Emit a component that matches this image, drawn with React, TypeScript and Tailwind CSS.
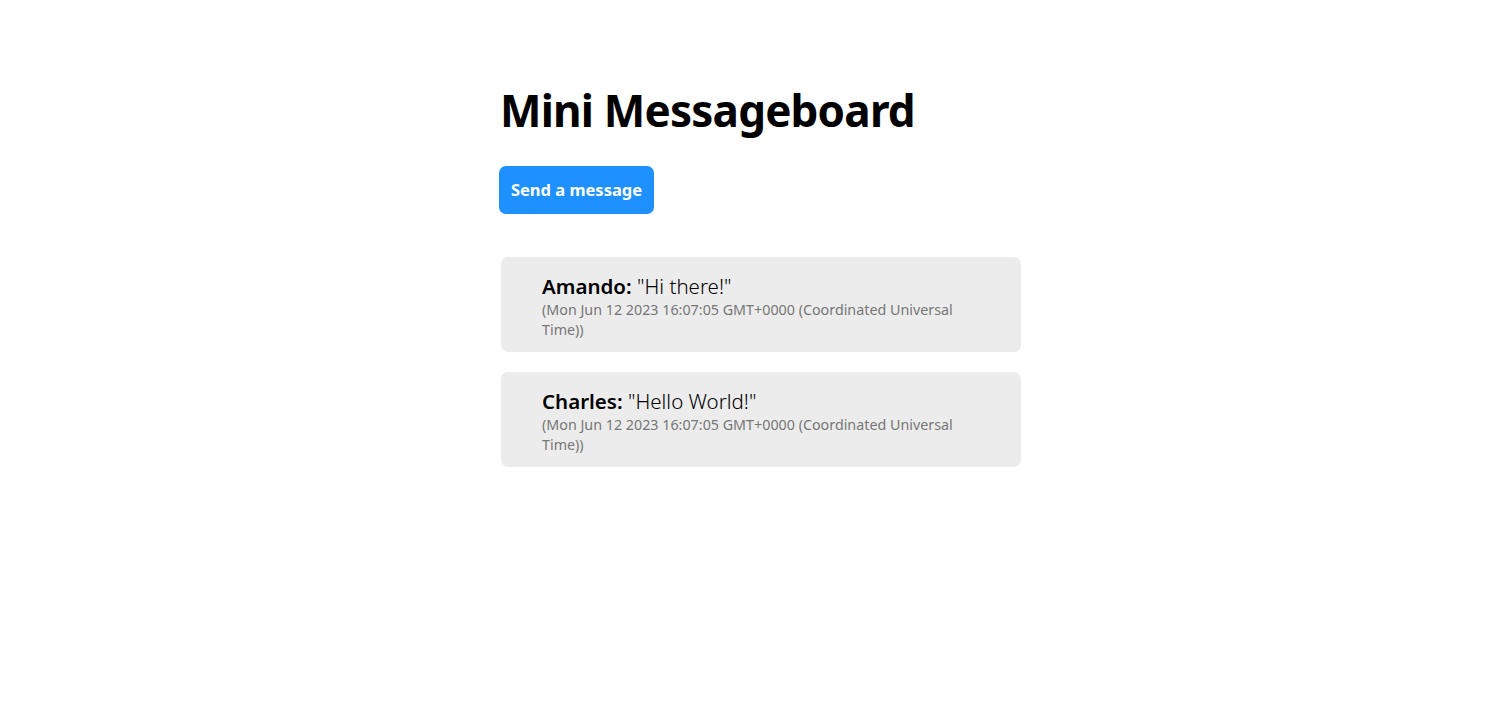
import React from "react";

interface Message {
  user: string;
  text: string;
  added: string;
}

const MESSAGES: Message[] = [
  { user: "Amando", text: "Hi there!", added: "Mon Jun 12 2023 16:07:05 GMT+0000 (Coordinated Universal Time)" },
  { user: "Charles", text: "Hello World!", added: "Mon Jun 12 2023 16:07:05 GMT+0000 (Coordinated Universal Time)" },
];

export default function App() {
  return (
    <div className="min-h-screen bg-white text-black font-['Noto_Sans',sans-serif]">
      <main className="ml-[500px] w-[521px] pt-[78px]">
        <h1 className="text-[44px] font-bold leading-[64px] tracking-[-0.8px]">Mini Messageboard</h1>
        <button className="mt-[24px] -ml-px h-[48px] w-[155px] rounded-[7px] bg-[#1e90ff] text-[16.5px] font-bold text-white">
          Send a message
        </button>
        <ul className="mt-[43px] flex flex-col gap-[20px]">
          {MESSAGES.map((m) => (
            <li key={m.user} className="ml-px rounded-[7px] bg-[#ececec] pl-[41px] pr-[60px] pt-[15px] pb-[12px]">
              <p className="text-[20.5px] leading-[28px]">
                <span className="font-semibold">{m.user}: </span>
                <span className="font-light">"{m.text}"</span>
              </p>
              <p className="text-[14.3px] leading-[20px] text-[#777777]">({m.added})</p>
            </li>
          ))}
        </ul>
      </main>
    </div>
  );
}
